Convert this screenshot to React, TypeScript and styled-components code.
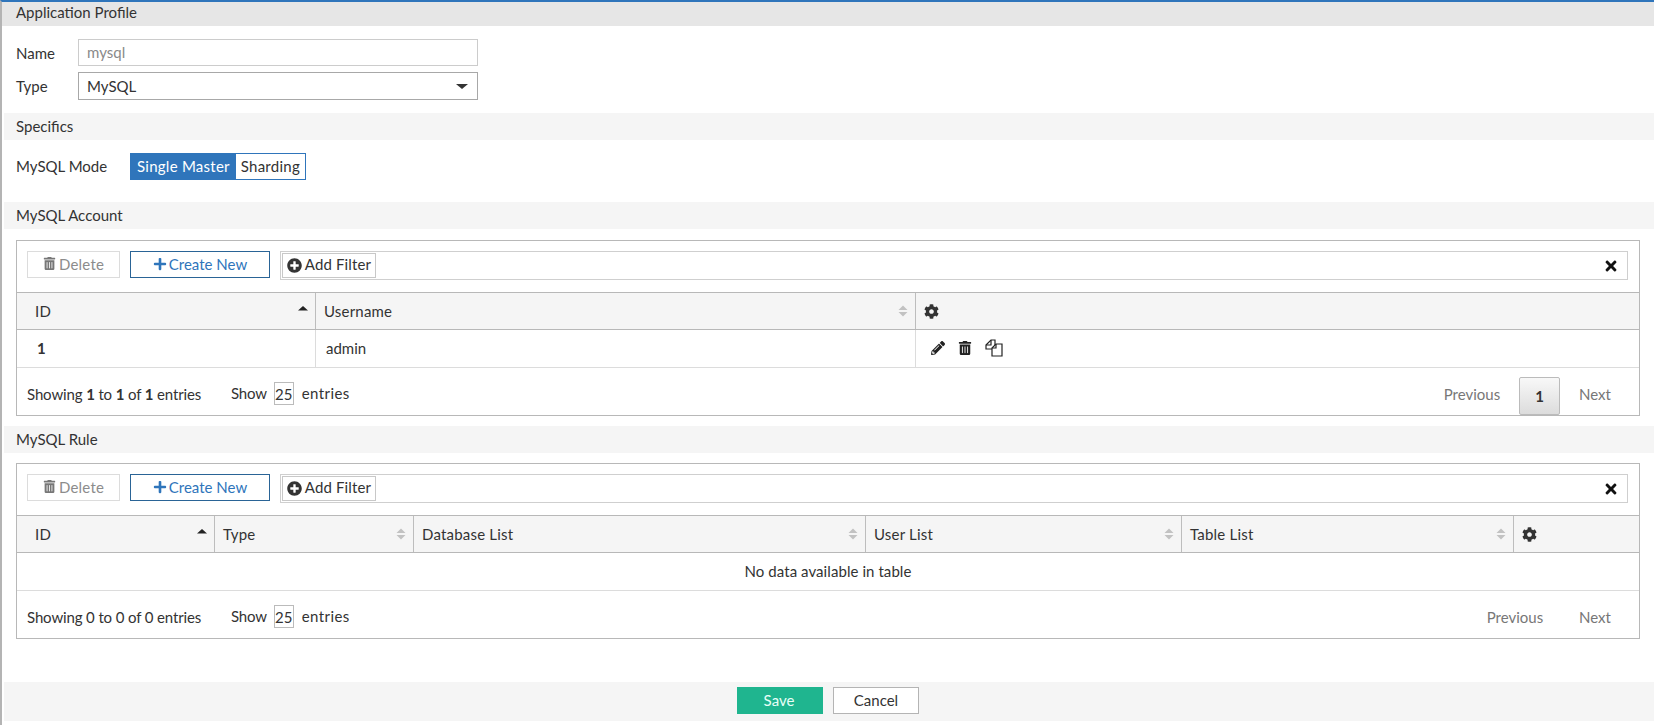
import React from "react";
import styled, { createGlobalStyle } from "styled-components";
import { FaCog, FaPencilAlt, FaPlus, FaPlusCircle, FaTimes, FaTrashAlt } from "react-icons/fa";

const Global = createGlobalStyle`
  html, body { margin: 0; padding: 0; background: #fff; }
  body { font-family: Lato, "Open Sans", "Liberation Sans", sans-serif; font-size: 15px; color: #333; overflow: hidden; }
`;

const Page = styled.div`
  width: 1654px;
  height: 725px;
  box-sizing: border-box;
  border-top: 2px solid #2f75bb;
  border-left: 2px solid #b4b4b4;
  display: flex;
  flex-direction: column;
`;
const SectionBar = styled.div<{ $strong?: boolean; $gap?: number }>`
  height: ${(p) => (p.$strong ? "24px" : "27px")};
  line-height: ${(p) => (p.$strong ? "21px" : "27px")};
  background: ${(p) => (p.$strong ? "#e6e6e6" : "#f5f5f5")};
  color: #333;
  flex: none;
  margin-top: ${(p) => p.$gap ?? 0}px;
  margin-left: ${(p) => (p.$strong ? "0" : "2px")};
  padding-left: ${(p) => (p.$strong ? "14px" : "12px")};
`;
const Form = styled.div`
  padding: 13px 0 13px 14px;
  display: flex;
  flex-direction: column;
  gap: 6px;
`;
const FormRow = styled.div`
  display: flex;
  align-items: center;
`;
const Label = styled.span`
  width: 62px;
`;
const Field = styled.div<{ $muted?: boolean; $h: number }>`
  width: 400px;
  height: ${(p) => p.$h}px;
  box-sizing: border-box;
  border: 1px solid ${(p) => (p.$muted ? "#ccc" : "#a8a8a8")};
  padding: 0 8px ${(p) => (p.$muted ? "2px" : "0")};
  color: ${(p) => (p.$muted ? "#8a8a8a" : "#333")};
  display: flex;
  align-items: center;
  justify-content: space-between;
`;
const Caret = styled.i`
  width: 0;
  height: 0;
  margin-right: 1px;
  border-left: 6px solid transparent;
  border-right: 6px solid transparent;
  border-top: 5px solid #333;
`;
const ModeRow = styled.div`
  height: 62px;
  padding: 13px 0 0 14px;
  box-sizing: border-box;
  display: flex;
  align-items: flex-start;
  flex: none;
`;
const ModeLabel = styled.span`
  width: 114px;
  line-height: 27px;
`;
const Segment = styled.div`
  display: flex;
  height: 27px;
  box-sizing: border-box;
  border: 1px solid #2f75bb;
`;
const SegmentItem = styled.span<{ $on?: boolean }>`
  padding: 0 ${(p) => (p.$on ? "6px" : "5px")} 0 ${(p) => (p.$on ? "6px" : "5px")};
  line-height: 25px;
  letter-spacing: 0.25px;
  background: ${(p) => (p.$on ? "#2f75bb" : "#fff")};
  color: ${(p) => (p.$on ? "#fff" : "#333")};
`;
const Panel = styled.div<{ $top: number }>`
  width: 1624px;
  margin: ${(p) => p.$top}px 0 0 14px;
  height: 176px;
  box-sizing: border-box;
  border: 1px solid #b8b8b8;
  flex: none;
  display: flex;
  flex-direction: column;
`;
const Toolbar = styled.div`
  height: 51px;
  box-sizing: border-box;
  padding: 10px 11px 0 10px;
  display: flex;
  align-items: flex-start;
  flex: none;
`;
const DeleteButton = styled.div`
  width: 93px;
  height: 27px;
  box-sizing: border-box;
  border: 1px solid #dcdcdc;
  padding-bottom: 2px;
  color: #8c8c8c;
  letter-spacing: 0.2px;
  display: flex;
  align-items: center;
  justify-content: center;
  gap: 3px;
  svg { font-size: 13px; color: #777; }
`;
const CreateButton = styled.div`
  width: 140px;
  height: 27px;
  margin-left: 10px;
  box-sizing: border-box;
  border: 1px solid #2a6496;
  padding-bottom: 2px;
  color: #2f75bb;
  display: flex;
  align-items: center;
  justify-content: center;
  gap: 2px;
  svg { font-size: 14px; }
`;
const FilterBox = styled.div`
  flex: 1;
  height: 29px;
  margin-left: 10px;
  box-sizing: border-box;
  border: 1px solid #cfcfcf;
  padding: 1px 8px 1px 1px;
  display: flex;
  align-items: center;
  justify-content: space-between;
  > svg { font-size: 16px; color: #111; }
`;
const AddFilter = styled.div`
  height: 25px;
  width: 94px;
  box-sizing: border-box;
  border: 1px solid #c8c8c8;
  padding-bottom: 3px;
  letter-spacing: 0.15px;
  display: flex;
  align-items: center;
  justify-content: center;
  gap: 3px;
  svg { font-size: 15px; color: #333; margin-top: 2px; }
`;
const HeadRow = styled.div<{ $cols: string }>`
  display: grid;
  grid-template-columns: ${(p) => p.$cols};
  height: 38px;
  box-sizing: border-box;
  border-top: 1px solid #b8b8b8;
  border-bottom: 1px solid #b8b8b8;
  background: #f5f5f5;
  flex: none;
`;
const HeadCell = styled.div<{ $pad?: number }>`
  display: flex;
  align-items: center;
  justify-content: space-between;
  padding: 0 6px 0 ${(p) => p.$pad ?? 8}px;
  border-right: 1px solid #bdbdbd;
  letter-spacing: 0.2px;
  &:last-child { border-right: 0; }
  svg { flex: none; }
`;
const BodyRow = styled.div<{ $cols: string }>`
  display: grid;
  grid-template-columns: ${(p) => p.$cols};
  height: 38px;
  box-sizing: border-box;
  border-bottom: 1px solid #dcdcdc;
  flex: none;
`;
const BodyCell = styled.div<{ $pad?: number }>`
  display: flex;
  align-items: center;
  padding-left: ${(p) => p.$pad ?? 10}px;
  padding-bottom: 2px;
  border-right: 1px solid #dcdcdc;
  &:last-child { border-right: 0; }
`;
const IdValue = styled.b`
  font-weight: 700;
`;
const Actions = styled.div`
  display: flex;
  align-items: center;
  gap: 13px;
  padding-left: 5px;
  svg { color: #222; font-size: 14px; }
`;
const EmptyRow = styled.div`
  height: 38px;
  box-sizing: border-box;
  border-bottom: 1px solid #dcdcdc;
  padding-bottom: 2px;
  letter-spacing: 0.07px;
  display: flex;
  align-items: center;
  justify-content: center;
  flex: none;
`;
const Pager = styled.div`
  flex: 1;
  display: flex;
  align-items: flex-start;
  padding-left: 10px;
`;
const Info = styled.span`
  margin-top: 17px;
  width: 204px;
  letter-spacing: -0.13px;
  b { font-weight: 700; }
`;
const ShowText = styled.span`
  margin-top: 16px;
  letter-spacing: -0.2px;
`;
const EntriesText = styled.span`
  margin-top: 16px;
  letter-spacing: 0.4px;
`;
const PageSize = styled.span`
  margin: 14px 8px 0 7px;
  width: 20px;
  height: 23px;
  box-sizing: border-box;
  border: 1px solid #bbb;
  display: flex;
  align-items: center;
  justify-content: center;
`;
const Pages = styled.div`
  margin-left: auto;
  padding-right: 9px;
  display: flex;
  align-items: flex-start;
`;
const PageLink = styled.span<{ $w: number }>`
  width: ${(p) => p.$w}px;
  text-align: center;
  margin-top: 17px;
  color: #777;
`;
const PageCurrent = styled.span`
  width: 41px;
  height: 38px;
  margin-top: 9px;
  box-sizing: border-box;
  border: 1px solid #bbb;
  border-radius: 2px;
  background: linear-gradient(#f8f8f8, #dcdcdc);
  display: flex;
  align-items: center;
  justify-content: center;
  font-weight: 700;
`;
const Spacer = styled.div`
  flex: 1;
`;
const FooterBar = styled.div`
  height: 39px;
  box-sizing: border-box;
  margin: 0 0 4px 2px;
  padding: 5px 2px 0 0;
  background: #f5f5f5;
  flex: none;
  display: flex;
  align-items: flex-start;
  justify-content: center;
  gap: 10px;
`;
const SaveButton = styled.div`
  width: 86px;
  height: 27px;
  box-sizing: border-box;
  padding: 0 2px 2px 0;
  background: #1fb58f;
  color: #e8fff8;
  display: flex;
  align-items: center;
  justify-content: center;
`;
const CancelButton = styled.div`
  width: 86px;
  height: 27px;
  box-sizing: border-box;
  padding-bottom: 2px;
  background: #fff;
  border: 1px solid #b4b4b4;
  display: flex;
  align-items: center;
  justify-content: center;
`;

const Sort = ({ active }: { active?: boolean }) =>
  active ? (
    <svg width="12" height="14" viewBox="0 0 12 14"><path d="M1 6.500 6 2l5 4.500z" fill="#222" /></svg>
  ) : (
    <svg width="12" height="14" viewBox="0 0 12 14" fill="#c2c2c2"><path d="M1.500 6 6 1.500 10.500 6z" /><path d="M1.500 8 6 12.500 10.500 8z" /></svg>
  );

const CopyIcon = () => (
  <svg width="18" height="18" viewBox="0 0 18 18" fill="#fff" stroke="#222" strokeWidth="1.200">
    <path d="M1 6 6 1h4v9H1z" />
    <path d="M6 1v5H1" fill="none" />
    <path d="M7 9 11 5h6v12H7z" />
    <path d="M11 5v4H7" fill="none" />
  </svg>
);

const ToolRow = () => (
  <Toolbar>
    <DeleteButton><FaTrashAlt />Delete</DeleteButton>
    <CreateButton><FaPlus />Create New</CreateButton>
    <FilterBox>
      <AddFilter><FaPlusCircle />Add Filter</AddFilter>
      <FaTimes />
    </FilterBox>
  </Toolbar>
);

const accountCols = "299px 600px 1fr";
const ruleCols = "198px 199px 452px 316px 332px 1fr";

export default function App() {
  return (
    <>
      <Global />
      <Page>
        <SectionBar $strong>Application Profile</SectionBar>
        <Form>
          <FormRow><Label>Name</Label><Field $muted $h={27}>mysql</Field></FormRow>
          <FormRow><Label>Type</Label><Field $h={28}>MySQL<Caret /></Field></FormRow>
        </Form>
        <SectionBar>Specifics</SectionBar>
        <ModeRow>
          <ModeLabel>MySQL Mode</ModeLabel>
          <Segment>
            <SegmentItem $on>Single Master</SegmentItem>
            <SegmentItem>Sharding</SegmentItem>
          </Segment>
        </ModeRow>
        <SectionBar>MySQL Account</SectionBar>
        <Panel $top={11}>
          <ToolRow />
          <HeadRow $cols={accountCols}>
            <HeadCell $pad={18}>ID<Sort active /></HeadCell>
            <HeadCell>Username<Sort /></HeadCell>
            <HeadCell><FaCog /></HeadCell>
          </HeadRow>
          <BodyRow $cols={accountCols}>
            <BodyCell $pad={20}><IdValue>1</IdValue></BodyCell>
            <BodyCell>admin</BodyCell>
            <BodyCell>
              <Actions><FaPencilAlt /><FaTrashAlt /><CopyIcon /></Actions>
            </BodyCell>
          </BodyRow>
          <Pager>
            <Info>Showing <b>1</b> to <b>1</b> of <b>1</b> entries</Info>
            <ShowText>Show</ShowText>
            <PageSize>25</PageSize>
            <EntriesText>entries</EntriesText>
            <Pages>
              <PageLink $w={94}>Previous</PageLink>
              <PageCurrent>1</PageCurrent>
              <PageLink $w={70}>Next</PageLink>
            </Pages>
          </Pager>
        </Panel>
        <SectionBar $gap={10}>MySQL Rule</SectionBar>
        <Panel $top={10}>
          <ToolRow />
          <HeadRow $cols={ruleCols}>
            <HeadCell $pad={18}>ID<Sort active /></HeadCell>
            <HeadCell>Type<Sort /></HeadCell>
            <HeadCell>Database List<Sort /></HeadCell>
            <HeadCell>User List<Sort /></HeadCell>
            <HeadCell>Table List<Sort /></HeadCell>
            <HeadCell><FaCog /></HeadCell>
          </HeadRow>
          <EmptyRow>No data available in table</EmptyRow>
          <Pager>
            <Info>Showing 0 to 0 of 0 entries</Info>
            <ShowText>Show</ShowText>
            <PageSize>25</PageSize>
            <EntriesText>entries</EntriesText>
            <Pages>
              <PageLink $w={90}>Previous</PageLink>
              <PageLink $w={70}>Next</PageLink>
            </Pages>
          </Pager>
        </Panel>
        <Spacer />
        <FooterBar>
          <SaveButton>Save</SaveButton>
          <CancelButton>Cancel</CancelButton>
        </FooterBar>
      </Page>
    </>
  );
}
